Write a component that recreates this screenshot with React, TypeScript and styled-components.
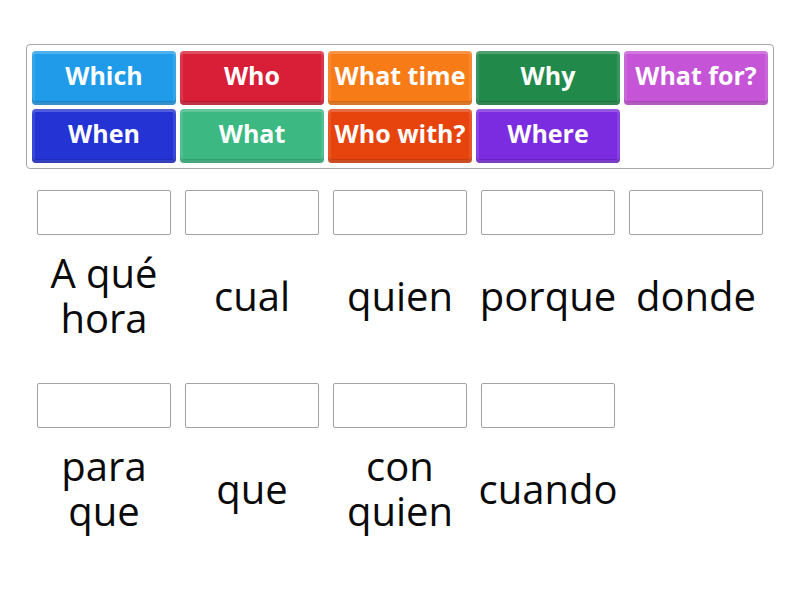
import React from "react";
import styled, { createGlobalStyle } from "styled-components";

const Global = createGlobalStyle`
  html, body { margin: 0; padding: 0; background: #fff; }
  body { font-family: "Open Sans", "Liberation Sans", sans-serif; }
`;

const Page = styled.div`
  width: 800px;
  height: 600px;
  padding-top: 44px;
  box-sizing: border-box;
`;

const Bank = styled.div`
  width: 748px;
  margin: 0 auto;
  box-sizing: border-box;
  border: 1px solid #a8a8a8;
  border-radius: 4px;
  padding: 6px 5px 5px 5px;
  display: grid;
  grid-template-columns: repeat(5, 144px);
  grid-auto-rows: 54px;
  gap: 4px;
`;

const Tile = styled.div<{ $bg: string }>`
  background: ${(p) => p.$bg};
  border-radius: 4px;
  display: flex;
  align-items: center;
  justify-content: center;
  padding-bottom: 7px;
  box-sizing: border-box;
  color: #fff;
  font-weight: 700;
  font-size: 25px;
  white-space: nowrap;
  box-shadow: inset 0 0 0 3px rgba(255, 255, 255, 0.1),
    inset 0 3px 0 rgba(255, 255, 255, 0.12),
    inset 0 -4px 0 rgba(0, 0, 0, 0.14);
`;

const Board = styled.div`
  width: 740px;
  margin: 21px auto 0;
  display: grid;
  grid-template-columns: repeat(5, 148px);
  grid-auto-rows: 193px;
`;

const Cell = styled.div`
  display: flex;
  flex-direction: column;
  align-items: center;
`;

const Drop = styled.div`
  width: 134px;
  height: 45px;
  box-sizing: border-box;
  border: 1px solid #a3a3a3;
  border-radius: 2px;
  background: #fff;
  box-shadow: 0 0 2px rgba(0, 0, 0, 0.06);
`;

const Word = styled.div`
  height: 120px;
  width: 148px;
  display: flex;
  align-items: center;
  justify-content: center;
  text-align: center;
  font-size: 40px;
  line-height: 45px;
  color: #0a0a0a;
`;

const tiles: [string, string][] = [
  ["Which", "#1f9be9"],
  ["Who", "#d81f37"],
  ["What time", "#f77b17"],
  ["Why", "#218a4b"],
  ["What for?", "#c555d6"],
  ["When", "#2433d4"],
  ["What", "#3cb883"],
  ["Who with?", "#e6430d"],
  ["Where", "#7b2ce0"],
];

const words = [
  "A qué hora",
  "cual",
  "quien",
  "porque",
  "donde",
  "para que",
  "que",
  "con quien",
  "cuando",
];

export default function App() {
  return (
    <>
      <Global />
      <Page>
        <Bank>
          {tiles.map(([t, c]) => (
            <Tile key={t} $bg={c}>
              {t}
            </Tile>
          ))}
        </Bank>
        <Board>
          {words.map((w) => (
            <Cell key={w}>
              <Drop />
              <Word>{w}</Word>
            </Cell>
          ))}
        </Board>
      </Page>
    </>
  );
}
